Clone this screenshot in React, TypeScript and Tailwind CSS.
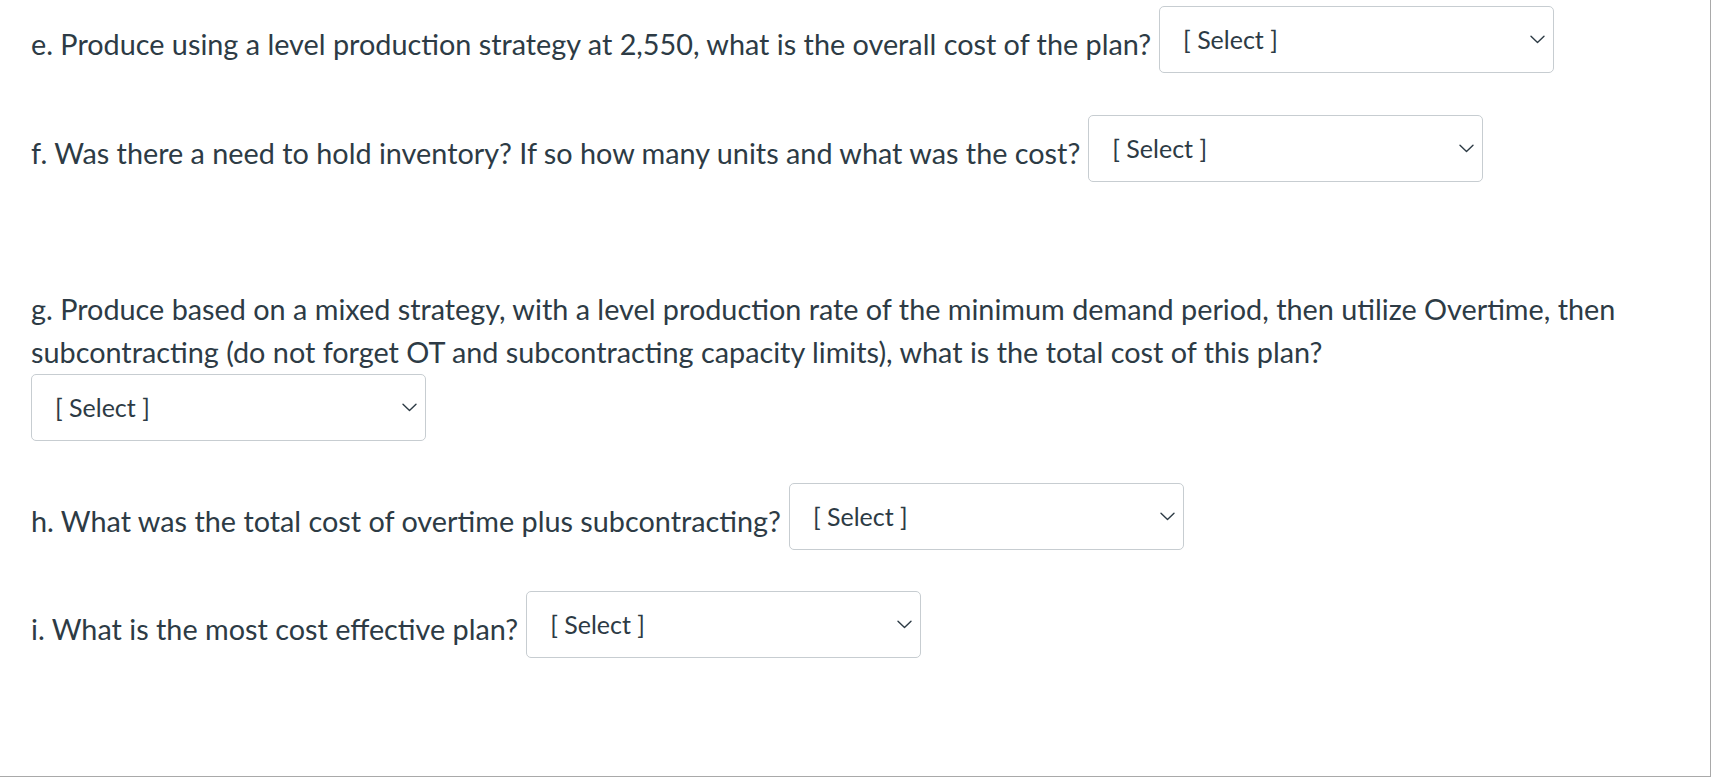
import React from "react";

function Chevron() {
  return (
    <svg width="15" height="9" viewBox="0 0 15 9" fill="none" aria-hidden="true">
      <path d="M1 1.2 L7.5 7.5 L14 1.2" stroke="#2d3b45" strokeWidth="1.4" strokeLinecap="round" strokeLinejoin="round" />
    </svg>
  );
}

function SelectBox({ className = "" }: { className?: string }) {
  return (
    <div
      className={`flex h-[67px] w-[395px] shrink-0 items-center justify-between rounded-[5px] border border-[#c7cdd1] bg-white pl-[23px] pr-[8px] ${className}`}
    >
      <span className="pb-[2px] text-[25px] leading-[30px] text-[#2d3b45]">[ Select ]</span>
      <span className="pb-[1px]">
        <Chevron />
      </span>
    </div>
  );
}

function InlineQuestion({ text, className = "" }: { text: string; className?: string }) {
  return (
    <div className={`flex items-start gap-[8px] ${className}`}>
      <span className="mt-[17px] whitespace-nowrap text-[28.8px] leading-[43px]">{text}</span>
      <SelectBox />
    </div>
  );
}

export default function App() {
  return (
    <div
      className="h-[778px] w-[1714px] overflow-hidden bg-white"
      style={{ fontFamily: "Lato, 'Noto Sans', sans-serif" }}
    >
      <div className="h-[777px] w-[1711px] border-b border-r border-[#a9a9a9] pl-[31px] pt-[6px] text-[#2d3b45]">
        <InlineQuestion text="e. Produce using a level production strategy at 2,550, what is the overall cost of the plan?" />
        <InlineQuestion
          className="mt-[42px]"
          text="f. Was there a need to hold inventory? If so how many units and what was the cost?"
        />
        <div className="mt-[106px]">
          <p className="max-w-[1660px] text-[28.8px] leading-[43px]">
            g. Produce based on a mixed strategy, with a level production rate of the minimum demand period, then utilize Overtime, then subcontracting (do not forget OT and subcontracting capacity limits), what is the total cost of this plan?
          </p>
          <SelectBox />
        </div>
        <InlineQuestion
          className="mt-[42px]"
          text="h. What was the total cost of overtime plus subcontracting?"
        />
        <InlineQuestion className="mt-[41px]" text="i. What is the most cost effective plan?" />
      </div>
    </div>
  );
}
